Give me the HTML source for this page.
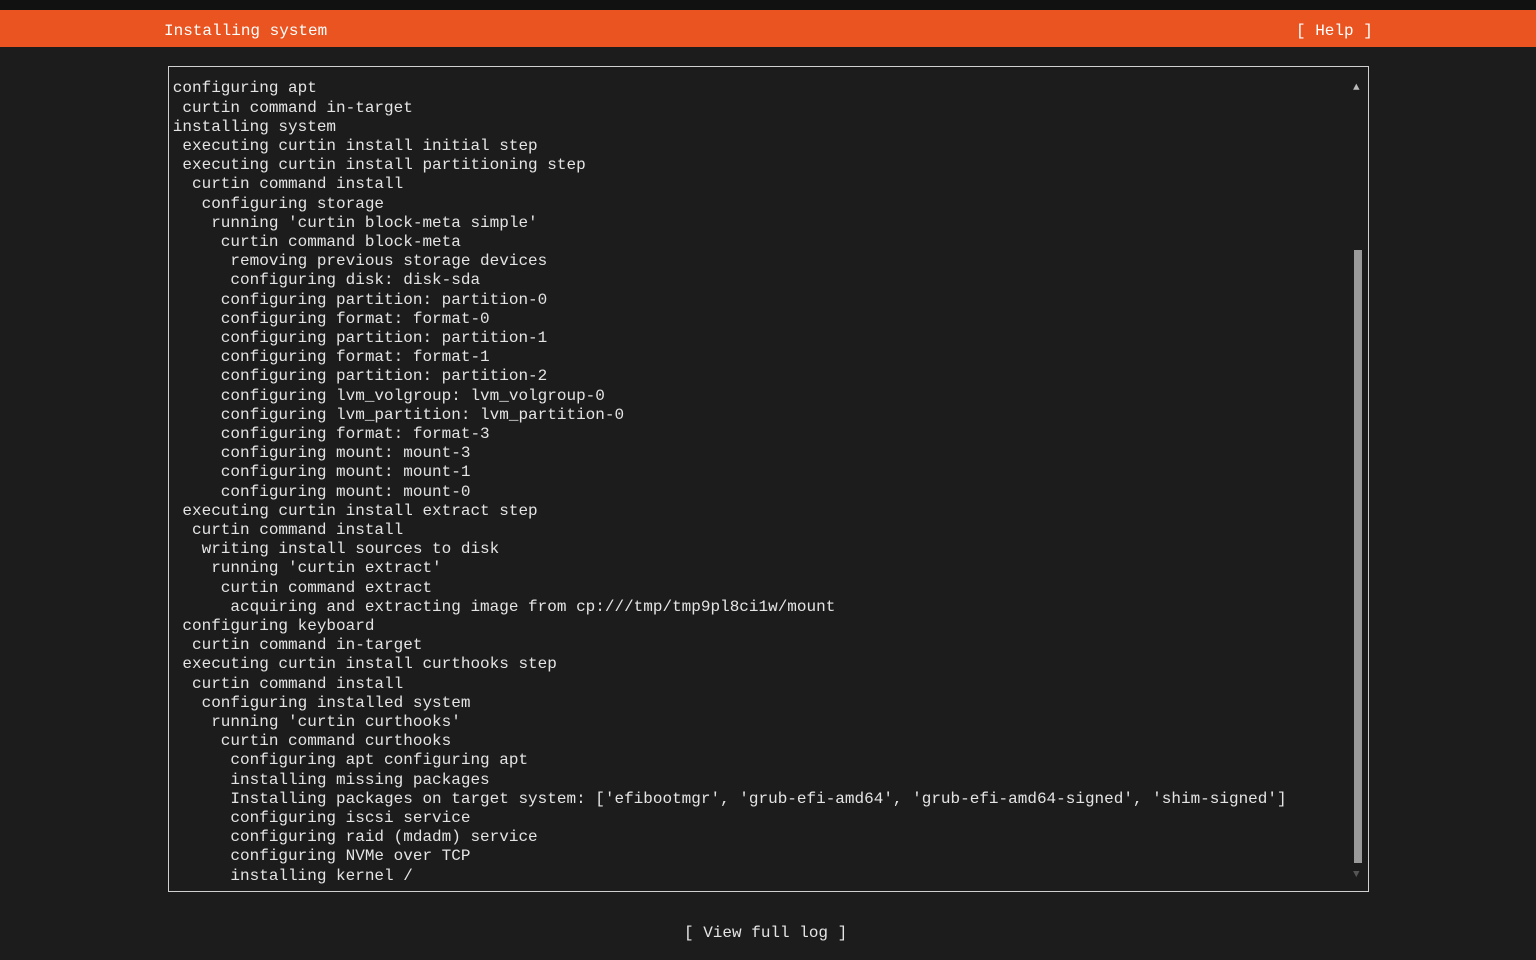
<!DOCTYPE html>
<html><head><meta charset="utf-8"><style>
html,body{margin:0;padding:0;background:#1c1c1c;width:1536px;height:960px;overflow:hidden;}
body{position:relative;font-family:"Liberation Mono","DejaVu Sans Mono",monospace;font-size:16px;color:#e4e4e4;}
.bar{position:absolute;left:0;top:10px;width:1536px;height:37px;background:#e95420;}
.top{position:absolute;left:0;top:0;width:1536px;height:10px;background:#111;}
.t{position:absolute;white-space:pre;line-height:19.2px;}
.box{position:absolute;left:168px;top:66px;width:1199px;height:824px;border:1.5px solid #d0d0d0;}
.thumb{position:absolute;left:1354px;top:250px;width:8px;height:613px;background:#9a9a9a;}
</style></head><body>
<div class="top"></div>
<div class="bar"></div>
<div class="t" style="left:164px;top:22px;color:#fff">Installing system</div>
<div class="t" style="left:1296px;top:22px;color:#fff">[ Help ]</div>
<div class="box"></div>
<div class="thumb"></div>
<div class="t" style="left:1353px;top:79px;font-size:11px;color:#bbb">▲</div>
<div class="t" style="left:1353px;top:866px;font-size:11px;color:#555">▼</div>
<div class="t" style="left:172.8px;top:79.3px">configuring apt
 curtin command in-target
installing system
 executing curtin install initial step
 executing curtin install partitioning step
  curtin command install
   configuring storage
    running 'curtin block-meta simple'
     curtin command block-meta
      removing previous storage devices
      configuring disk: disk-sda
     configuring partition: partition-0
     configuring format: format-0
     configuring partition: partition-1
     configuring format: format-1
     configuring partition: partition-2
     configuring lvm_volgroup: lvm_volgroup-0
     configuring lvm_partition: lvm_partition-0
     configuring format: format-3
     configuring mount: mount-3
     configuring mount: mount-1
     configuring mount: mount-0
 executing curtin install extract step
  curtin command install
   writing install sources to disk
    running 'curtin extract'
     curtin command extract
      acquiring and extracting image from cp:///tmp/tmp9pl8ci1w/mount
 configuring keyboard
  curtin command in-target
 executing curtin install curthooks step
  curtin command install
   configuring installed system
    running 'curtin curthooks'
     curtin command curthooks
      configuring apt configuring apt
      installing missing packages
      Installing packages on target system: ['efibootmgr', 'grub-efi-amd64', 'grub-efi-amd64-signed', 'shim-signed']
      configuring iscsi service
      configuring raid (mdadm) service
      configuring NVMe over TCP
      installing kernel /</div>
<div class="t" style="left:684px;top:924px">[ View full log ]</div>
</body></html>
